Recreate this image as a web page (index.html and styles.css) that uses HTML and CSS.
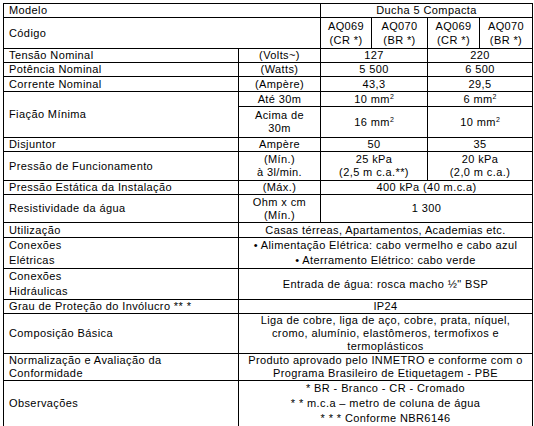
FILE: index.html
```html
<!DOCTYPE html>
<html lang="pt">
<head>
<meta charset="utf-8">
<title>Ducha 5 Compacta</title>
<link rel="stylesheet" href="styles.css">
</head>
<body>
<table class="spec">
  <colgroup>
    <col class="c-label">
    <col class="c-unit">
    <col class="c-v1">
    <col class="c-v2">
    <col class="c-v3">
    <col class="c-v4">
  </colgroup>
  <tr class="h14">
    <td class="lbl" colspan="2">Modelo</td>
    <td class="val" colspan="4">Ducha 5 Compacta</td>
  </tr>
  <tr class="h31">
    <td class="lbl" colspan="2">Código</td>
    <td class="val code">AQ069<br>(CR *)</td>
    <td class="val code">AQ070<br>(BR *)</td>
    <td class="val code">AQ069<br>(CR *)</td>
    <td class="val code">AQ070<br>(BR *)</td>
  </tr>
  <tr class="h14">
    <td class="lbl">Tensão Nominal</td>
    <td class="unit">(Volts~)</td>
    <td class="val" colspan="2">127</td>
    <td class="val" colspan="2">220</td>
  </tr>
  <tr class="h14">
    <td class="lbl">Potência Nominal</td>
    <td class="unit">(Watts)</td>
    <td class="val" colspan="2">5 500</td>
    <td class="val" colspan="2">6 500</td>
  </tr>
  <tr class="h15">
    <td class="lbl">Corrente Nominal</td>
    <td class="unit">(Ampère)</td>
    <td class="val" colspan="2">43,3</td>
    <td class="val" colspan="2">29,5</td>
  </tr>
  <tr class="h15">
    <td class="lbl" rowspan="2">Fiação Mínima</td>
    <td class="unit">Até 30m</td>
    <td class="val" colspan="2">10 mm<sup>2</sup></td>
    <td class="val" colspan="2">6 mm<sup>2</sup></td>
  </tr>
  <tr class="h31">
    <td class="unit">Acima de<br>30m</td>
    <td class="val" colspan="2">16 mm<sup>2</sup></td>
    <td class="val" colspan="2">10 mm<sup>2</sup></td>
  </tr>
  <tr class="h14">
    <td class="lbl">Disjuntor</td>
    <td class="unit">Ampère</td>
    <td class="val" colspan="2">50</td>
    <td class="val" colspan="2">35</td>
  </tr>
  <tr class="h29">
    <td class="lbl">Pressão de Funcionamento</td>
    <td class="unit">(Mín.)<br>à 3l/min.</td>
    <td class="val" colspan="2">25 kPa<br>(2,5 m c.a.**)</td>
    <td class="val" colspan="2">20 kPa<br>(2,0 m c.a.)</td>
  </tr>
  <tr class="h14">
    <td class="lbl">Pressão Estática da Instalação</td>
    <td class="unit">(Máx.)</td>
    <td class="val" colspan="4">400 kPa (40 m.c.a)</td>
  </tr>
  <tr class="h28">
    <td class="lbl">Resistividade da água</td>
    <td class="unit">Ohm x cm<br>(Mín.)</td>
    <td class="val" colspan="4">1 300</td>
  </tr>
  <tr class="h15">
    <td class="lbl">Utilização</td>
    <td class="val" colspan="5">Casas térreas, Apartamentos, Academias etc.</td>
  </tr>
  <tr class="h30">
    <td class="lbl loose">Conexões<br>Elétricas</td>
    <td class="val loose" colspan="5">• Alimentação Elétrica: cabo vermelho e cabo azul<br>• Aterramento Elétrico: cabo verde</td>
  </tr>
  <tr class="h30">
    <td class="lbl loose">Conexões<br>Hidráulicas</td>
    <td class="val" colspan="5">Entrada de água: rosca macho ½" BSP</td>
  </tr>
  <tr class="h14">
    <td class="lbl">Grau de Proteção do Invólucro ** *</td>
    <td class="val" colspan="5">IP24</td>
  </tr>
  <tr class="h40">
    <td class="lbl">Composição Básica</td>
    <td class="val" colspan="5">Liga de cobre, liga de aço, cobre, prata, níquel,<br>cromo, alumínio, elastômeros, termofixos e<br>termoplásticos</td>
  </tr>
  <tr class="h26">
    <td class="lbl">Normalização e Avaliação da<br>Conformidade</td>
    <td class="val" colspan="5">Produto aprovado pelo INMETRO e conforme com o<br>Programa Brasileiro de Etiquetagem - PBE</td>
  </tr>
  <tr class="h46">
    <td class="lbl">Observações</td>
    <td class="val loose" colspan="5">* BR - Branco - CR - Cromado<br>* * m.c.a – metro de coluna de água<br>* * * Conforme NBR6146</td>
  </tr>
</table>
</body>
</html>
```

FILE: styles.css
```css
html, body {
  margin: 0;
  padding: 0;
  background: #ffffff;
}

body {
  padding: 3px 0 0 3px;
  font-family: "Liberation Sans", Arial, sans-serif;
  font-size: 11px;
  color: #000000;
}

.spec {
  border-collapse: collapse;
  table-layout: fixed;
  width: 530px;
  letter-spacing: 0.4px;
}

.c-label { width: 235px; }
.c-unit { width: 82px; }
.c-v1 { width: 51px; }
.c-v2 { width: 56px; }
.c-v3 { width: 52px; }
.c-v4 { width: 53px; }

.spec td {
  border: 1px solid #000000;
  padding: 0 2px;
  line-height: 13px;
  vertical-align: middle;
  white-space: nowrap;
  overflow: hidden;
}

.spec td.lbl {
  text-align: left;
  padding-left: 5px;
}

.spec td.unit,
.spec td.val {
  text-align: center;
}

.spec td.code {
  line-height: 14px;
}

.spec td.loose {
  line-height: 15px;
}

sup {
  font-size: 7px;
  line-height: 0;
  vertical-align: 4px;
  letter-spacing: 0;
}

.h14 { height: 14px; }
.h15 { height: 15px; }
.h26 { height: 26px; }
.h28 { height: 28px; }
.h29 { height: 29px; }
.h30 { height: 30px; }
.h31 { height: 31px; }
.h40 { height: 40px; }
.h46 { height: 46px; }
```
